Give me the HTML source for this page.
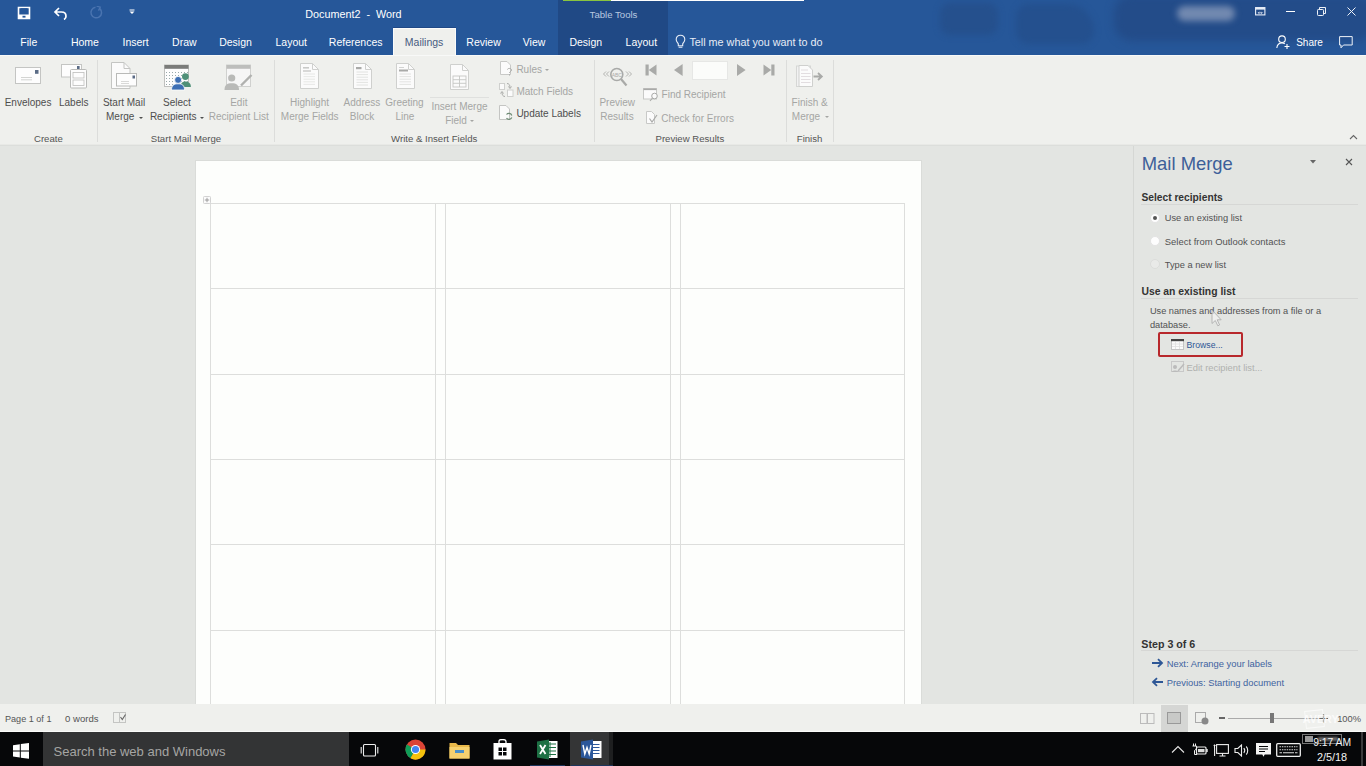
<!DOCTYPE html>
<html><head><meta charset="utf-8">
<style>
*{margin:0;padding:0;box-sizing:border-box}
html,body{width:1366px;height:766px;overflow:hidden;background:#e3e4e2;font-family:"Liberation Sans",sans-serif;position:relative}
.a{position:absolute}
.t{position:absolute;white-space:nowrap;line-height:1}
svg{display:block}
</style></head><body>
<div class="a" style="left:0px;top:0px;width:1366px;height:55px;background:#265799;"></div>
<div class="a" style="left:880px;top:0px;width:486px;height:50px;overflow:hidden;"><div class="a" style="left:60px;top:3px;width:58px;height:32px;border-radius:10px;background:#25508d;filter:blur(3px)"></div><div class="a" style="left:136px;top:4px;width:78px;height:40px;border-radius:14px 30px 14px 14px;background:#24508e;filter:blur(3px)"></div><div class="a" style="left:234px;top:-5px;width:260px;height:46px;border-radius:18px;background:#234c89;filter:blur(4px)"></div><div class="a" style="left:297px;top:6px;width:58px;height:15px;border-radius:8px;background:#7289b0;filter:blur(3px)"></div></div>
<div class="a" style="left:558px;top:0px;width:110px;height:55px;background:#204985;"></div>
<div class="a" style="left:563px;top:0px;width:48px;height:1px;background:#8ac43f;"></div>
<div class="a" style="left:611px;top:0px;width:193px;height:1px;background:#ffffff;"></div>
<svg class="a" style="left:17px;top:6px;" width="14" height="14" viewBox="0 0 14 14"><path d="M1.5 1.5h11v11h-11z" fill="none" stroke="#fff" stroke-width="1.6"/><rect x="3.5" y="2.2" width="7" height="4.8" fill="#265799"/><rect x="1.5" y="8.5" width="11" height="4" fill="#fff"/><rect x="5.5" y="9.8" width="3" height="1.8" fill="#265799"/></svg>
<svg class="a" style="left:53px;top:6px;" width="15" height="14" viewBox="0 0 15 14"><path d="M6 2 L2 6 L6 10 M2.5 6 H8.5 C11.5 6 13 8 13 10.2 C13 12 12 13 11 13.5" fill="none" stroke="#fff" stroke-width="1.7"/></svg>
<svg class="a" style="left:89px;top:6px;" width="15" height="14" viewBox="0 0 15 14"><path d="M10.8 2.6 A5.3 5.3 0 1 1 6.5 1.3" fill="none" stroke="#4a74b0" stroke-width="1.5"/><path d="M7.6 0.2 L11.2 1.2 L9.5 4.6" fill="none" stroke="#4a74b0" stroke-width="1.4"/></svg>
<svg class="a" style="left:129px;top:9px;" width="6" height="6" viewBox="0 0 6 6"><rect x="0.5" y="0.5" width="5" height="1" fill="#fff"/><path d="M0.5 2.5 H5.5 L3 5 Z" fill="#fff"/></svg>
<div class="t" style="left:305.2px;top:9.26px;font-size:10.80px;color:#ffffff;font-weight:400;">Document2&nbsp;&nbsp;-&nbsp;&nbsp;Word</div>
<div class="t" style="left:589.6px;top:10.17px;font-size:9.60px;color:#b8c8e0;font-weight:400;">Table Tools</div>
<div class="t" style="left:20.3px;top:37.41px;font-size:10.50px;color:#ffffff;font-weight:400;">File</div>
<div class="t" style="left:70.9px;top:37.41px;font-size:10.50px;color:#ffffff;font-weight:400;">Home</div>
<div class="t" style="left:122.5px;top:37.41px;font-size:10.50px;color:#ffffff;font-weight:400;">Insert</div>
<div class="t" style="left:172.1px;top:37.41px;font-size:10.50px;color:#ffffff;font-weight:400;">Draw</div>
<div class="t" style="left:219.2px;top:37.41px;font-size:10.50px;color:#ffffff;font-weight:400;">Design</div>
<div class="t" style="left:275.5px;top:37.41px;font-size:10.50px;color:#ffffff;font-weight:400;">Layout</div>
<div class="t" style="left:328.8px;top:37.41px;font-size:10.50px;color:#ffffff;font-weight:400;">References</div>
<div class="t" style="left:466.3px;top:37.41px;font-size:10.50px;color:#ffffff;font-weight:400;">Review</div>
<div class="t" style="left:522.8px;top:37.41px;font-size:10.50px;color:#ffffff;font-weight:400;">View</div>
<div class="t" style="left:569.4px;top:37.41px;font-size:10.50px;color:#ffffff;font-weight:400;">Design</div>
<div class="t" style="left:625.6px;top:37.41px;font-size:10.50px;color:#ffffff;font-weight:400;">Layout</div>
<div class="a" style="left:393px;top:28px;width:63px;height:28px;background:#fafbfb;"></div>
<div class="a" style="left:394px;top:29px;width:61px;height:27px;background:#eff0ed;"></div>
<div class="a" style="left:393px;top:27px;width:63px;height:1px;background:#1f4886;"></div>
<div class="t" style="left:404.8px;top:37.41px;font-size:10.50px;color:#475b80;font-weight:400;">Mailings</div>
<svg class="a" style="left:675px;top:34px;" width="11" height="16" viewBox="0 0 11 16"><path d="M5.5 1.2 C2.8 1.2 1.2 3.2 1.2 5.4 C1.2 7.4 2.6 8.6 3.3 9.8 V11.8 H7.7 V9.8 C8.4 8.6 9.8 7.4 9.8 5.4 C9.8 3.2 8.2 1.2 5.5 1.2 Z M3.6 13.2 H7.4" fill="none" stroke="#e8eef7" stroke-width="1.1"/></svg>
<div class="t" style="left:689.4px;top:37.16px;font-size:10.80px;color:#e6ecf5;font-weight:400;">Tell me what you want to do</div>
<svg class="a" style="left:1255px;top:7px;" width="11" height="9" viewBox="0 0 11 9"><rect x="0.6" y="0.6" width="9.3" height="7.3" fill="none" stroke="#e8eef7" stroke-width="1.1"/><rect x="0.6" y="0.6" width="9.3" height="2" fill="#e8eef7"/><path d="M3.5 5.8 H7 M4.2 4.8 L3.2 5.8 L4.2 6.8 M6.3 4.8 L7.3 5.8 L6.3 6.8" fill="none" stroke="#e8eef7" stroke-width="0.8"/></svg>
<div class="a" style="left:1286px;top:11px;width:9px;height:1px;background:#ffffff;"></div>
<svg class="a" style="left:1317px;top:7px;" width="9" height="9" viewBox="0 0 9 9"><rect x="0.5" y="2.5" width="6" height="6" rx="0.8" fill="none" stroke="#eef2f8" stroke-width="1"/><path d="M2.5 2.5 V0.5 H8.5 V6.5 H6.5" fill="none" stroke="#eef2f8" stroke-width="1"/></svg>
<svg class="a" style="left:1347px;top:7px;" width="9" height="9" viewBox="0 0 9 9"><path d="M0.5 0.5 L8.5 8.5 M8.5 0.5 L0.5 8.5" stroke="#eef2f8" stroke-width="1"/></svg>
<svg class="a" style="left:1276px;top:35px;" width="15" height="14" viewBox="0 0 15 14"><circle cx="6" cy="4.2" r="3.3" fill="none" stroke="#fff" stroke-width="1.1"/><path d="M0.8 13 C1.2 9.5 3.5 8 6 8 C7 8 8 8.2 8.8 8.8" fill="none" stroke="#fff" stroke-width="1.1"/><path d="M11 9 V14 M8.5 11.5 H13.5" stroke="#fff" stroke-width="1.1"/></svg>
<div class="t" style="left:1296.2px;top:38.13px;font-size:10.00px;color:#ffffff;font-weight:400;">Share</div>
<svg class="a" style="left:1339px;top:36px;" width="14" height="13" viewBox="0 0 14 13"><path d="M0.6 0.6 H13.2 V9 H4.5 L2 11.8 V9 H0.6 Z" fill="none" stroke="#eef2f8" stroke-width="1"/></svg>
<div class="a" style="left:0px;top:55px;width:1366px;height:89px;background:#eff0ed;"></div>
<div class="a" style="left:0px;top:55px;width:1366px;height:1px;background:#f8f9f8;"></div>
<div class="a" style="left:0px;top:144px;width:1366px;height:1px;background:#e8e9e6;"></div>
<div class="a" style="left:0px;top:145px;width:1366px;height:1px;background:#dcdedb;"></div>
<div class="a" style="left:97px;top:60px;width:1px;height:82px;background:#dcdddb;"></div>
<div class="a" style="left:274px;top:60px;width:1px;height:82px;background:#dcdddb;"></div>
<div class="a" style="left:594px;top:60px;width:1px;height:82px;background:#dcdddb;"></div>
<div class="a" style="left:786px;top:60px;width:1px;height:82px;background:#dcdddb;"></div>
<div class="a" style="left:833px;top:60px;width:1px;height:82px;background:#dcdddb;"></div>
<div class="t" style="left:4.7px;top:98.13px;font-size:10.00px;color:#4e4e4e;font-weight:400;">Envelopes</div>
<div class="t" style="left:59.0px;top:98.13px;font-size:10.00px;color:#4e4e4e;font-weight:400;">Labels</div>
<div class="t" style="left:102.9px;top:98.13px;font-size:10.00px;color:#4e4e4e;font-weight:400;">Start Mail</div>
<div class="t" style="left:106.0px;top:112.33px;font-size:10.00px;color:#4e4e4e;font-weight:400;">Merge</div>
<div class="t" style="left:163.1px;top:98.13px;font-size:10.00px;color:#4e4e4e;font-weight:400;">Select</div>
<div class="t" style="left:149.9px;top:112.33px;font-size:10.00px;color:#4e4e4e;font-weight:400;">Recipients</div>
<div class="t" style="left:230.2px;top:98.13px;font-size:10.00px;color:#a5a6a4;font-weight:400;">Edit</div>
<div class="t" style="left:208.7px;top:112.33px;font-size:10.00px;color:#a5a6a4;font-weight:400;">Recipient List</div>
<div class="t" style="left:34.0px;top:133.67px;font-size:9.60px;color:#555555;font-weight:400;">Create</div>
<div class="t" style="left:150.8px;top:133.67px;font-size:9.60px;color:#555555;font-weight:400;">Start Mail Merge</div>
<div class="t" style="left:290.1px;top:98.03px;font-size:10.00px;color:#a5a6a4;font-weight:400;">Highlight</div>
<div class="t" style="left:280.8px;top:112.03px;font-size:10.00px;color:#a5a6a4;font-weight:400;">Merge Fields</div>
<div class="t" style="left:343.6px;top:98.03px;font-size:10.00px;color:#a5a6a4;font-weight:400;">Address</div>
<div class="t" style="left:349.8px;top:112.03px;font-size:10.00px;color:#a5a6a4;font-weight:400;">Block</div>
<div class="t" style="left:385.3px;top:98.03px;font-size:10.00px;color:#a5a6a4;font-weight:400;">Greeting</div>
<div class="t" style="left:395.4px;top:112.03px;font-size:10.00px;color:#a5a6a4;font-weight:400;">Line</div>
<div class="t" style="left:431.4px;top:102.33px;font-size:10.00px;color:#a5a6a4;font-weight:400;">Insert Merge</div>
<div class="t" style="left:445.2px;top:115.73px;font-size:10.00px;color:#a5a6a4;font-weight:400;">Field</div>
<div class="a" style="left:430px;top:97px;width:59px;height:1px;background:#dfe0de;"></div>
<div class="t" style="left:516.4px;top:64.73px;font-size:10.00px;color:#a5a6a4;font-weight:400;">Rules</div>
<div class="t" style="left:516.4px;top:86.73px;font-size:10.00px;color:#a5a6a4;font-weight:400;">Match Fields</div>
<div class="t" style="left:516.4px;top:108.93px;font-size:10.00px;color:#4e4e4e;font-weight:400;">Update Labels</div>
<div class="t" style="left:391.1px;top:134.17px;font-size:9.60px;color:#555555;font-weight:400;">Write &amp; Insert Fields</div>
<div class="t" style="left:599.4px;top:98.33px;font-size:10.00px;color:#a5a6a4;font-weight:400;">Preview</div>
<div class="t" style="left:600.3px;top:112.13px;font-size:10.00px;color:#a5a6a4;font-weight:400;">Results</div>
<div class="t" style="left:661.6px;top:90.43px;font-size:10.00px;color:#a5a6a4;font-weight:400;">Find Recipient</div>
<div class="t" style="left:661.2px;top:114.13px;font-size:10.00px;color:#a5a6a4;font-weight:400;">Check for Errors</div>
<div class="t" style="left:655.5px;top:134.27px;font-size:9.60px;color:#555555;font-weight:400;">Preview Results</div>
<div class="t" style="left:791.6px;top:98.33px;font-size:10.00px;color:#a5a6a4;font-weight:400;">Finish &amp;</div>
<div class="t" style="left:791.8px;top:112.13px;font-size:10.00px;color:#a5a6a4;font-weight:400;">Merge</div>
<div class="t" style="left:796.8px;top:134.27px;font-size:9.60px;color:#555555;font-weight:400;">Finish</div>
<svg class="a" style="left:139px;top:117px;" width="4" height="2" viewBox="0 0 4 2"><path d="M0 0 H4 L2 2 Z" fill="#4e4e4e"/></svg>
<svg class="a" style="left:200px;top:117px;" width="4" height="2" viewBox="0 0 4 2"><path d="M0 0 H4 L2 2 Z" fill="#4e4e4e"/></svg>
<svg class="a" style="left:470px;top:120px;" width="4" height="2" viewBox="0 0 4 2"><path d="M0 0 H4 L2 2 Z" fill="#a5a6a4"/></svg>
<svg class="a" style="left:545px;top:69px;" width="4" height="2" viewBox="0 0 4 2"><path d="M0 0 H4 L2 2 Z" fill="#a5a6a4"/></svg>
<svg class="a" style="left:825px;top:116px;" width="4" height="2" viewBox="0 0 4 2"><path d="M0 0 H4 L2 2 Z" fill="#a5a6a4"/></svg>
<svg class="a" style="left:1349px;top:134px;" width="9" height="6" viewBox="0 0 9 6"><path d="M1 5 L4.5 1.5 L8 5" fill="none" stroke="#666" stroke-width="1.1"/></svg>
<svg class="a" style="left:15px;top:67px;" width="27" height="18" viewBox="0 0 27 18"><rect x="0.5" y="0.5" width="25" height="16" fill="#fdfdfd" stroke="#c4c5c3"/><rect x="20" y="3" width="3.5" height="3.8" fill="#5a6b85"/><path d="M6 10.5 H17 M6 12.8 H17" stroke="#c8c9c7" stroke-width="0.8"/></svg>
<svg class="a" style="left:60px;top:63px;" width="28" height="27" viewBox="0 0 28 27"><rect x="1.5" y="1.5" width="20" height="12.5" fill="#fdfdfd" stroke="#c4c5c3"/><rect x="17" y="3" width="2.6" height="3" fill="#5a6b85"/><rect x="10.5" y="6.5" width="16" height="18.5" rx="1" fill="#fdfdfd" stroke="#b9bab8"/><rect x="13" y="9.5" width="11" height="5.5" fill="none" stroke="#bdbebc" stroke-width="0.8"/><rect x="13" y="17" width="11" height="5.5" fill="none" stroke="#bdbebc" stroke-width="0.8"/></svg>
<svg class="a" style="left:110px;top:62px;" width="28" height="28" viewBox="0 0 28 28"><path d="M1.5 0.5 H14 L20 6.5 V26.5 H1.5 Z" fill="#fbfbfb" stroke="#c4c5c3"/><path d="M14 0.5 V6.5 H20" fill="none" stroke="#c4c5c3"/><rect x="6.5" y="11.5" width="20" height="12.5" fill="#fdfdfd" stroke="#b9bab8"/><rect x="22.5" y="13.5" width="2.5" height="3" fill="#5a6b85"/><path d="M11 19.5 H19 M11 21.5 H19" stroke="#c8c9c7" stroke-width="0.7"/></svg>
<svg class="a" style="left:164px;top:64px;" width="29" height="27" viewBox="0 0 29 27"><rect x="0.5" y="1" width="24" height="21.5" fill="#fdfdfd" stroke="#bfc0be"/><rect x="0.5" y="1" width="24" height="3.8" fill="#7b7c7a"/><rect x="2" y="8" width="1" height="1" fill="#9aa"/><rect x="2" y="11" width="1" height="1" fill="#9aa"/><rect x="2" y="14" width="1" height="1" fill="#9aa"/><rect x="2" y="17" width="1" height="1" fill="#9aa"/><rect x="2" y="20" width="1" height="1" fill="#9aa"/><rect x="5" y="8" width="1" height="1" fill="#9aa"/><rect x="5" y="11" width="1" height="1" fill="#9aa"/><rect x="5" y="14" width="1" height="1" fill="#9aa"/><rect x="5" y="17" width="1" height="1" fill="#9aa"/><rect x="5" y="20" width="1" height="1" fill="#9aa"/><rect x="8" y="8" width="1" height="1" fill="#9aa"/><rect x="8" y="11" width="1" height="1" fill="#9aa"/><rect x="8" y="14" width="1" height="1" fill="#9aa"/><rect x="8" y="17" width="1" height="1" fill="#9aa"/><rect x="8" y="20" width="1" height="1" fill="#9aa"/><rect x="11" y="8" width="1" height="1" fill="#9aa"/><rect x="11" y="11" width="1" height="1" fill="#9aa"/><rect x="11" y="14" width="1" height="1" fill="#9aa"/><rect x="11" y="17" width="1" height="1" fill="#9aa"/><rect x="11" y="20" width="1" height="1" fill="#9aa"/><rect x="14" y="8" width="1" height="1" fill="#9aa"/><rect x="14" y="11" width="1" height="1" fill="#9aa"/><rect x="14" y="14" width="1" height="1" fill="#9aa"/><rect x="14" y="17" width="1" height="1" fill="#9aa"/><rect x="14" y="20" width="1" height="1" fill="#9aa"/><rect x="17" y="8" width="1" height="1" fill="#9aa"/><rect x="17" y="11" width="1" height="1" fill="#9aa"/><rect x="17" y="14" width="1" height="1" fill="#9aa"/><rect x="17" y="17" width="1" height="1" fill="#9aa"/><rect x="17" y="20" width="1" height="1" fill="#9aa"/><rect x="20" y="8" width="1" height="1" fill="#9aa"/><rect x="20" y="11" width="1" height="1" fill="#9aa"/><rect x="20" y="14" width="1" height="1" fill="#9aa"/><rect x="20" y="17" width="1" height="1" fill="#9aa"/><rect x="20" y="20" width="1" height="1" fill="#9aa"/><rect x="23" y="8" width="1" height="1" fill="#9aa"/><rect x="23" y="11" width="1" height="1" fill="#9aa"/><rect x="23" y="14" width="1" height="1" fill="#9aa"/><rect x="23" y="17" width="1" height="1" fill="#9aa"/><rect x="23" y="20" width="1" height="1" fill="#9aa"/><circle cx="21.4" cy="12.6" r="3.4" fill="#4f9078"/><path d="M16.5 23 C16.5 18.8 18.6 17.5 21.4 17.5 C24.2 17.5 26.9 18.8 26.9 23 Z" fill="#4f9078"/><circle cx="14.1" cy="15.9" r="3.5" fill="#3d6fb4" stroke="#fdfdfd" stroke-width="0.8"/><path d="M7.5 26 C7.5 21.3 10 19.8 14.1 19.8 C18.2 19.8 20.5 21.3 20.5 26 Z" fill="#3d6fb4" stroke="#fdfdfd" stroke-width="0.8"/></svg>
<svg class="a" style="left:224px;top:64px;" width="30" height="27" viewBox="0 0 30 27"><rect x="2.5" y="1" width="24" height="21.5" fill="#f6f6f6" stroke="#d0d1cf"/><rect x="2.5" y="1" width="24" height="3.8" fill="#bdbebc"/><circle cx="7.7" cy="14" r="3.6" fill="#b9bab8"/><path d="M0.5 26 C0.5 21 3 19.3 7.7 19.3 C12.4 19.3 15 21 15 26 Z" fill="#b9bab8"/><path d="M17 21.5 L27.5 11" stroke="#b0b1af" stroke-width="2.4"/></svg>
<svg class="a" style="left:300px;top:63px;" width="19" height="26" viewBox="0 0 19 26"><path d="M0.5 0.5 H12.5 L18.5 6.5 V25.5 H0.5 Z" fill="#fbfbfb" stroke="#cfd0ce" stroke-width="1"/><path d="M12.5 0.5 V6.5 H18.5" fill="none" stroke="#cfd0ce" stroke-width="1"/><rect x="3" y="4" width="6" height="1.6" fill="#c9cac8"/><rect x="3" y="7.5" width="8" height="1" fill="#b5b6b4"/><path d="M3.5 11.0 H15" stroke="#e2e3e1" stroke-width="0.8"/><path d="M3.5 13.6 H15" stroke="#e2e3e1" stroke-width="0.8"/><path d="M3.5 16.2 H15" stroke="#e2e3e1" stroke-width="0.8"/><path d="M3.5 18.8 H15" stroke="#e2e3e1" stroke-width="0.8"/><path d="M3.5 21.4 H15" stroke="#e2e3e1" stroke-width="0.8"/></svg>
<svg class="a" style="left:353px;top:63px;" width="19" height="26" viewBox="0 0 19 26"><path d="M0.5 0.5 H12.5 L18.5 6.5 V25.5 H0.5 Z" fill="#fbfbfb" stroke="#cfd0ce" stroke-width="1"/><path d="M12.5 0.5 V6.5 H18.5" fill="none" stroke="#cfd0ce" stroke-width="1"/><rect x="3" y="4" width="5.5" height="2.2" fill="#a9aaa8"/><path d="M3.5 9.0 H15" stroke="#dcdddb" stroke-width="0.8"/><path d="M3.5 11.6 H15" stroke="#dcdddb" stroke-width="0.8"/><path d="M3.5 14.2 H15" stroke="#dcdddb" stroke-width="0.8"/><path d="M3.5 16.8 H15" stroke="#dcdddb" stroke-width="0.8"/><path d="M3.5 19.4 H15" stroke="#dcdddb" stroke-width="0.8"/><path d="M3.5 22.0 H15" stroke="#dcdddb" stroke-width="0.8"/></svg>
<svg class="a" style="left:396px;top:63px;" width="19" height="26" viewBox="0 0 19 26"><path d="M0.5 0.5 H12.5 L18.5 6.5 V25.5 H0.5 Z" fill="#fbfbfb" stroke="#cfd0ce" stroke-width="1"/><path d="M12.5 0.5 V6.5 H18.5" fill="none" stroke="#cfd0ce" stroke-width="1"/><rect x="3" y="4" width="5" height="0.8" fill="#c9cac8"/><rect x="3" y="6.5" width="9" height="2" fill="#a9aaa8"/><path d="M3.5 11.0 H15" stroke="#dcdddb" stroke-width="0.8"/><path d="M3.5 13.6 H15" stroke="#dcdddb" stroke-width="0.8"/><path d="M3.5 16.2 H15" stroke="#dcdddb" stroke-width="0.8"/><path d="M3.5 18.8 H15" stroke="#dcdddb" stroke-width="0.8"/><path d="M3.5 21.4 H15" stroke="#dcdddb" stroke-width="0.8"/></svg>
<svg class="a" style="left:450px;top:64px;" width="19" height="26" viewBox="0 0 19 26"><path d="M0.5 0.5 H12.5 L18.5 6.5 V25.5 H0.5 Z" fill="#fbfbfb" stroke="#cfd0ce" stroke-width="1"/><path d="M12.5 0.5 V6.5 H18.5" fill="none" stroke="#cfd0ce" stroke-width="1"/><rect x="3" y="12" width="13" height="11" fill="none" stroke="#c5c6c4" stroke-width="0.9"/><path d="M3 15.7 H16 M3 19.3 H16 M9.5 12 V23" stroke="#c5c6c4" stroke-width="0.9"/></svg>
<svg class="a" style="left:500px;top:61px;" width="13" height="15" viewBox="0 0 13 15"><path d="M0.5 0.5 H7 L10.5 4 V13.5 H0.5 Z" fill="#fbfbfb" stroke="#c8c9c7"/><path d="M7.5 8.5 C7.5 7 11.5 7 11.5 9 C11.5 10.5 9.5 10.5 9.5 12 M9.5 13.2 V14.5" fill="none" stroke="#a9aaa8" stroke-width="1"/></svg>
<svg class="a" style="left:499px;top:83px;" width="15" height="14" viewBox="0 0 15 14"><rect x="0.5" y="0.5" width="5" height="6" fill="#fbfbfb" stroke="#cfd0ce"/><rect x="8.5" y="7" width="5.5" height="6.5" fill="#fbfbfb" stroke="#cfd0ce"/><path d="M8 0.5 C10 0.5 11 2 11 4.5 M9.5 3.5 L11 5.5 L12.5 3.5 M6 13.5 C4 13.5 3 12 3 9.5 M1.5 10.5 L3 8.5 L4.5 10.5" fill="none" stroke="#a9aaa8" stroke-width="1"/></svg>
<svg class="a" style="left:499px;top:105px;" width="14" height="16" viewBox="0 0 14 16"><path d="M0.5 0.5 H7 L10.5 4 V14.5 H0.5 Z" fill="#fbfbfb" stroke="#c4c5c3"/><path d="M7.5 9.5 A3 3 0 0 1 12.8 10.5 M12.8 12.5 A3 3 0 0 1 7.5 13" fill="none" stroke="#6e8b74" stroke-width="1.2"/></svg>
<svg class="a" style="left:601px;top:66px;" width="32" height="22" viewBox="0 0 32 22"><circle cx="15.8" cy="8.5" r="6" fill="none" stroke="#a9aaa8" stroke-width="1.6"/><path d="M20 13 L25.5 19.5" stroke="#a9aaa8" stroke-width="2.2"/><text x="15.8" y="10.5" font-size="5" text-anchor="middle" fill="#a9aaa8" font-family="Liberation Sans">ABC</text><path d="M5 5.5 L2.5 8 L5 10.5 M8 5.5 L5.5 8 L8 10.5 M25 5.5 L27.5 8 L25 10.5 M28 5.5 L30.5 8 L28 10.5" fill="none" stroke="#a9aaa8" stroke-width="0.9"/></svg>
<svg class="a" style="left:645px;top:64px;" width="12" height="12" viewBox="0 0 12 12"><rect x="0.5" y="0.5" width="3.2" height="11" fill="#a9aaa8"/><path d="M11.5 0.5 V11.5 L3.7 6 Z" fill="#a9aaa8"/></svg>
<svg class="a" style="left:674px;top:64px;" width="9" height="12" viewBox="0 0 9 12"><path d="M8.6 0 V12 L0 6 Z" fill="#a9aaa8"/></svg>
<div class="a" style="left:692px;top:61px;width:36px;height:19px;background:#fbfcfa;border:1px solid #e6e7e5"></div>
<svg class="a" style="left:737px;top:64px;" width="9" height="12" viewBox="0 0 9 12"><path d="M0 0 V12 L8.6 6 Z" fill="#a9aaa8"/></svg>
<svg class="a" style="left:763px;top:64px;" width="12" height="12" viewBox="0 0 12 12"><path d="M0.5 0.5 V11.5 L8.3 6 Z" fill="#a9aaa8"/><rect x="8.3" y="0.5" width="3.2" height="11" fill="#a9aaa8"/></svg>
<svg class="a" style="left:643px;top:88px;" width="16" height="14" viewBox="0 0 16 14"><rect x="0.5" y="0.5" width="13" height="10.5" fill="#fbfbfb" stroke="#c8c9c7"/><rect x="0.5" y="0.5" width="13" height="1.6" fill="#a9aaa8"/><circle cx="11.5" cy="8" r="2.8" fill="#fbfbfb" stroke="#a9aaa8" stroke-width="1"/><path d="M9.5 10 L7 13" stroke="#a9aaa8" stroke-width="1.1"/></svg>
<svg class="a" style="left:646px;top:111px;" width="12" height="14" viewBox="0 0 12 14"><path d="M0.5 0.5 H5.5 L8.5 3.5 V12.5 H0.5 Z" fill="#fbfbfb" stroke="#c8c9c7"/><path d="M3.5 7.5 L6 11 L11 4" fill="none" stroke="#a9aaa8" stroke-width="1.2"/></svg>
<svg class="a" style="left:796px;top:65px;" width="28" height="23" viewBox="0 0 28 23"><rect x="0.5" y="1" width="14" height="20.5" fill="#f2f2f2" stroke="#d6d7d5"/><path d="M3 0.5 H12 L16.5 5 V21.5 H3 Z" fill="#fbfbfb" stroke="#cfd0ce"/><path d="M5 5 H12 M5 8.5 H14.5 M5 11.5 H14.5 M5 14.5 H14.5 M5 17.5 H14.5" stroke="#dcd6d9" stroke-width="0.8"/><path d="M17.5 11.5 H25.5 M22 8 L25.8 11.5 L22 15" fill="none" stroke="#a9aaa8" stroke-width="1.8"/></svg>
<div class="a" style="left:0px;top:146px;width:1133px;height:559px;background:#e3e5e2;"></div>
<div class="a" style="left:195px;top:160px;width:727px;height:545px;background:#dadcd9;"></div>
<div class="a" style="left:196px;top:161px;width:725px;height:544px;background:#fdfefc;"></div>
<div class="a" style="left:210px;top:203px;width:695px;height:1px;background:#dddedc;"></div>
<div class="a" style="left:210px;top:288px;width:695px;height:1px;background:#dddedc;"></div>
<div class="a" style="left:210px;top:374px;width:695px;height:1px;background:#dddedc;"></div>
<div class="a" style="left:210px;top:459px;width:695px;height:1px;background:#dddedc;"></div>
<div class="a" style="left:210px;top:544px;width:695px;height:1px;background:#dddedc;"></div>
<div class="a" style="left:210px;top:630px;width:695px;height:1px;background:#dddedc;"></div>
<div class="a" style="left:210px;top:203px;width:1px;height:502px;background:#dddedc;"></div>
<div class="a" style="left:435px;top:203px;width:1px;height:502px;background:#dddedc;"></div>
<div class="a" style="left:445px;top:203px;width:1px;height:502px;background:#dddedc;"></div>
<div class="a" style="left:670px;top:203px;width:1px;height:502px;background:#dddedc;"></div>
<div class="a" style="left:680px;top:203px;width:1px;height:502px;background:#dddedc;"></div>
<div class="a" style="left:904px;top:203px;width:1px;height:502px;background:#dddedc;"></div>
<svg class="a" style="left:203px;top:196px;" width="8" height="8" viewBox="0 0 8 8"><rect x="0.5" y="0.5" width="7" height="7" rx="0.8" fill="#fbfbfb" stroke="#d2d2d2" stroke-width="1"/><path d="M4 1.8 V6.2 M1.8 4 H6.2" stroke="#8a8a8a" stroke-width="0.8"/></svg>
<div class="a" style="left:1133px;top:146px;width:233px;height:559px;background:#e3e5e2;"></div>
<div class="a" style="left:1133px;top:146px;width:1px;height:559px;background:#d5d7d4;"></div>
<div class="t" style="left:1141.8px;top:154.52px;font-size:18.40px;color:#3d5f99;font-weight:400;">Mail Merge</div>
<svg class="a" style="left:1310px;top:160px;" width="6" height="4" viewBox="0 0 6 4"><path d="M0 0 H6 L3 3.5 Z" fill="#666"/></svg>
<svg class="a" style="left:1345px;top:158px;" width="8" height="8" viewBox="0 0 8 8"><path d="M1 1 L7 7 M7 1 L1 7" stroke="#555" stroke-width="1.1"/></svg>
<div class="t" style="left:1141.4px;top:193.13px;font-size:10.24px;color:#333;font-weight:700;">Select recipients</div>
<div class="a" style="left:1141px;top:204px;width:217px;height:1px;background:#d6d7d5;"></div>
<svg class="a" style="left:1149px;top:212px;" width="12" height="12" viewBox="0 0 12 12"><circle cx="6" cy="6" r="4.5" fill="#fdfdfd" stroke="#e0e0e0" stroke-width="0.8"/><circle cx="6" cy="6" r="2" fill="#555"/></svg>
<svg class="a" style="left:1149px;top:235px;" width="12" height="12" viewBox="0 0 12 12"><circle cx="6" cy="6" r="4.5" fill="#fdfdfd" stroke="#e0e0e0" stroke-width="0.8"/></svg>
<svg class="a" style="left:1149px;top:258px;" width="12" height="12" viewBox="0 0 12 12"><circle cx="6" cy="6" r="4.5" fill="#e9eae8" stroke="#d8d9d7" stroke-width="0.8"/></svg>
<div class="t" style="left:1164.8px;top:214.34px;font-size:9.28px;color:#525252;font-weight:400;">Use an existing list</div>
<div class="t" style="left:1164.8px;top:237.30px;font-size:9.45px;color:#525252;font-weight:400;">Select from Outlook contacts</div>
<div class="t" style="left:1164.8px;top:260.54px;font-size:9.28px;color:#525252;font-weight:400;">Type a new list</div>
<div class="t" style="left:1141.4px;top:287.12px;font-size:10.38px;color:#333;font-weight:700;">Use an existing list</div>
<div class="a" style="left:1141px;top:298px;width:217px;height:1px;background:#d6d7d5;"></div>
<div class="t" style="left:1149.9px;top:306.99px;font-size:9.23px;color:#525252;font-weight:400;">Use names and addresses from a file or a</div>
<div class="t" style="left:1149.9px;top:320.56px;font-size:9.27px;color:#525252;font-weight:400;">database.</div>
<div class="a" style="left:1158px;top:332px;width:85px;height:25px;border:2px solid #b8282c;border-radius:2px"></div>
<svg class="a" style="left:1171px;top:339px;" width="13" height="11" viewBox="0 0 13 11"><rect x="0.5" y="0.5" width="12" height="10" fill="#fbfbfb" stroke="#c4c4c4" stroke-width="1"/><path d="M1 5 H12 M1 7.5 H12 M4.5 3 V10 M8.5 3 V10" stroke="#e0e0e0" stroke-width="0.8"/><rect x="0" y="0" width="13" height="2.2" fill="#444"/></svg>
<div class="t" style="left:1186.5px;top:341.43px;font-size:8.71px;color:#2e5796;font-weight:400;">Browse...</div>
<svg class="a" style="left:1171px;top:361px;" width="14" height="13" viewBox="0 0 14 13"><rect x="0.5" y="0.5" width="12" height="10" fill="none" stroke="#c8c8c8" stroke-width="1"/><circle cx="4" cy="6" r="2" fill="#bbb"/><path d="M1 11 C1 9 7 9 7 11Z" fill="#bbb"/><path d="M7 10 L13 3" stroke="#bbb" stroke-width="1.5"/></svg>
<div class="t" style="left:1186.5px;top:363.57px;font-size:9.37px;color:#b0b1af;font-weight:400;">Edit recipient list...</div>
<svg class="a" style="left:1211px;top:309px;opacity:0.7" width="11" height="18" viewBox="0 0 11 18"><path d="M1 1 V14.5 L4.3 11.5 L6.8 16.8 L8.6 16 L6.2 10.8 H10.2 Z" fill="#f4f4f4" stroke="#9a9a9a" stroke-width="0.9"/></svg>
<div class="t" style="left:1141.3px;top:638.86px;font-size:10.68px;color:#333;font-weight:700;">Step 3 of 6</div>
<div class="a" style="left:1141px;top:650px;width:217px;height:1px;background:#d6d7d5;"></div>
<svg class="a" style="left:1151px;top:658px;" width="13" height="10" viewBox="0 0 13 10"><path d="M1 5 H11 M7 1.2 L11 5 L7 8.8" fill="none" stroke="#2e5796" stroke-width="1.8"/></svg>
<div class="t" style="left:1166.7px;top:660.16px;font-size:9.38px;color:#3e63a0;font-weight:400;">Next: Arrange your labels</div>
<svg class="a" style="left:1151px;top:677px;" width="13" height="10" viewBox="0 0 13 10"><path d="M12 5 H2 M6 1.2 L2 5 L6 8.8" fill="none" stroke="#2e5796" stroke-width="1.8"/></svg>
<div class="t" style="left:1166.7px;top:678.58px;font-size:9.36px;color:#3e63a0;font-weight:400;">Previous: Starting document</div>
<div class="a" style="left:0px;top:704px;width:1366px;height:28px;background:#eff0ed;"></div>
<div class="a" style="left:0px;top:731px;width:1366px;height:1px;background:#fafbf9;"></div>
<div class="t" style="left:5.0px;top:714.60px;font-size:9.09px;color:#555;font-weight:400;">Page 1 of 1</div>
<div class="t" style="left:65.0px;top:714.20px;font-size:9.57px;color:#555;font-weight:400;">0 words</div>
<svg class="a" style="left:113px;top:712px;" width="14" height="11" viewBox="0 0 14 11"><rect x="0.5" y="0.5" width="6" height="10" fill="none" stroke="#c4c5c3" stroke-width="1"/><rect x="6.5" y="0.5" width="6" height="10" fill="none" stroke="#c4c5c3" stroke-width="1"/><path d="M7.5 5 L9.3 7.5 L12.5 2.5" fill="none" stroke="#666" stroke-width="1.1"/></svg>
<svg class="a" style="left:1140px;top:713px;" width="15" height="12" viewBox="0 0 15 12"><rect x="0.5" y="0.5" width="6.5" height="10" fill="none" stroke="#bbb"/><rect x="7.5" y="0.5" width="6.5" height="10" fill="none" stroke="#bbb"/></svg>
<div class="a" style="left:1161px;top:705px;width:27px;height:27px;background:#d5d6d4;"></div>
<svg class="a" style="left:1167px;top:712px;" width="15" height="13" viewBox="0 0 15 13"><rect x="0.5" y="0.5" width="13" height="11" fill="#c8c9c7" stroke="#999"/></svg>
<svg class="a" style="left:1195px;top:712px;" width="15" height="13" viewBox="0 0 15 13"><rect x="0.5" y="0.5" width="10" height="10" fill="none" stroke="#aaa"/><circle cx="10" cy="9" r="3.5" fill="#888"/></svg>
<div class="a" style="left:1219px;top:717px;width:6px;height:2px;background:#666;"></div>
<div class="a" style="left:1228px;top:718px;width:98px;height:1px;background:#aaa;"></div>
<div class="a" style="left:1270px;top:713px;width:4px;height:10px;background:#777;"></div>
<svg class="a" style="left:1319px;top:714px;" width="10" height="9" viewBox="0 0 10 9"><path d="M0 4.5 H9 M4.5 0 V9" stroke="#666" stroke-width="1.2"/></svg>
<div class="t" style="left:1337.2px;top:714.92px;font-size:9.31px;color:#555;font-weight:400;">100%</div>
<div class="a" style="left:0px;top:732px;width:1366px;height:34px;background:#060709;"></div>
<svg class="a" style="left:13px;top:743px;" width="17" height="16" viewBox="0 0 17 16"><path d="M0 2.2 L6.8 1.2 V7.4 H0Z M7.8 1 L16 0 V7.4 H7.8Z M0 8.4 H6.8 V14.6 L0 13.6Z M7.8 8.4 H16 V15.8 L7.8 14.8Z" fill="#fff"/></svg>
<div class="a" style="left:43px;top:732px;width:306px;height:34px;background:#333435;"></div>
<div class="t" style="left:53.5px;top:745.29px;font-size:13.00px;color:#a5a5a3;font-weight:400;">Search the web and Windows</div>
<svg class="a" style="left:360px;top:743px;" width="20" height="15" viewBox="0 0 20 15"><rect x="3.5" y="1.5" width="12" height="11.5" rx="1" fill="none" stroke="#eee" stroke-width="1.1"/><path d="M1.2 4 V10.5 M17.8 4 V10.5" stroke="#eee" stroke-width="1.1"/></svg>
<svg class="a" style="left:405px;top:739px;" width="21" height="21" viewBox="0 0 21 21"><circle cx="10.5" cy="10.5" r="10" fill="#db4437"/><path d="M10.5 10.5 L1.8 5.5 A10 10 0 0 0 5.5 19.2 Z" fill="#0f9d58"/><path d="M10.5 10.5 L5.5 19.2 A10 10 0 0 0 20.5 10.5 Z" fill="#f4c20d"/><circle cx="10.5" cy="10.5" r="4.6" fill="#fff"/><circle cx="10.5" cy="10.5" r="3.6" fill="#4285f4"/></svg>
<svg class="a" style="left:449px;top:741px;" width="21" height="18" viewBox="0 0 21 18"><path d="M0.5 2 H7 L9 4 H20.5 V17.5 H0.5 Z" fill="#e8b84a"/><rect x="0.5" y="6" width="20" height="11.5" fill="#f6d16f"/><rect x="6" y="9" width="9" height="3" fill="#4a90c9"/></svg>
<svg class="a" style="left:492px;top:739px;" width="21" height="21" viewBox="0 0 21 21"><path d="M7 4 V2.5 C7 1 8 0.5 10.5 0.5 C13 0.5 14 1 14 2.5 V4" fill="none" stroke="#fff" stroke-width="1.3"/><path d="M1.5 4 H19.5 V20.5 H1.5Z" fill="#fff"/><rect x="6.5" y="8.5" width="3.5" height="3.5" fill="#060709"/><rect x="11" y="8.5" width="3.5" height="3.5" fill="#060709"/><rect x="6.5" y="13" width="3.5" height="3.5" fill="#060709"/><rect x="11" y="13" width="3.5" height="3.5" fill="#060709"/></svg>
<svg class="a" style="left:537px;top:739px;" width="21" height="21" viewBox="0 0 21 21"><rect x="6" y="2" width="14.5" height="17" fill="#fff"/><path d="M7.5 5 H19 M7.5 8.5 H19 M7.5 12 H19 M7.5 15.5 H19 M13 3 V18" stroke="#1d7044" stroke-width="1"/><path d="M0 2.5 L12 0.5 V20.5 L0 18.5Z" fill="#1d7044"/><path d="M3 6 L8.5 15 M8.5 6 L3 15" stroke="#fff" stroke-width="1.8"/></svg>
<div class="a" style="left:570px;top:732px;width:39px;height:34px;background:#343536;"></div>
<div class="a" style="left:609px;top:732px;width:4px;height:34px;background:#1e1f20;"></div>
<div class="a" style="left:530px;top:765px;width:35px;height:1px;background:#1d355c;"></div>
<div class="a" style="left:571px;top:765px;width:42px;height:1px;background:#1d355c;"></div>
<svg class="a" style="left:581px;top:739px;" width="21" height="21" viewBox="0 0 21 21"><rect x="6" y="2" width="14.5" height="17" fill="#fff"/><path d="M9.5 5.5 H18.5 M9.5 8.5 H18.5 M9.5 11.5 H18.5 M9.5 14.5 H18.5" stroke="#2b579a" stroke-width="1.2"/><path d="M0 2.5 L12 0.5 V20.5 L0 18.5Z" fill="#2b579a"/><path d="M2 6 L3.8 15 L6 8.5 L8.2 15 L10 6" fill="none" stroke="#fff" stroke-width="1.4"/></svg>
<svg class="a" style="left:1171px;top:745px;" width="14" height="9" viewBox="0 0 14 9"><path d="M1 7.5 L7 1.5 L13 7.5" fill="none" stroke="#e6e6e6" stroke-width="1.1"/></svg>
<svg class="a" style="left:1191px;top:743px;" width="17" height="13" viewBox="0 0 17 13"><path d="M2.5 0.5 V3 M4.5 0.5 V3 M1.5 3 H5.5 V5 C5.5 6.5 3.5 6.5 3.5 8 V11.5 H6" fill="none" stroke="#eee" stroke-width="1"/><rect x="5.5" y="4" width="9.5" height="7" rx="1" fill="none" stroke="#eee" stroke-width="1.2"/><rect x="7" y="6" width="6.5" height="3.2" fill="#ddd"/><rect x="15.2" y="6" width="1.5" height="3" fill="#eee"/></svg>
<svg class="a" style="left:1213px;top:744px;" width="16" height="13" viewBox="0 0 16 13"><rect x="3.6" y="0.6" width="11.8" height="8.8" fill="none" stroke="#eee" stroke-width="1.1"/><path d="M9.5 9.5 V11.8 M6.5 12 H12.5 M1.5 0.5 V4 M0.6 1.5 H2.6 M1.6 4 V12" fill="none" stroke="#eee" stroke-width="1.1"/></svg>
<svg class="a" style="left:1234px;top:744px;" width="16" height="13" viewBox="0 0 16 13"><path d="M1 4.5 H3.8 L7.5 1 V12 L3.8 8.5 H1 Z" fill="none" stroke="#eee" stroke-width="1.1"/><path d="M9.8 4.2 C10.8 5.4 10.8 7.6 9.8 8.8 M12.2 2.5 C14.2 4.5 14.2 8.5 12.2 10.5" fill="none" stroke="#eee" stroke-width="1.1"/></svg>
<svg class="a" style="left:1256px;top:743px;" width="15" height="15" viewBox="0 0 15 15"><path d="M0 0 H15 V11.5 H8.7 L7.5 13.8 L6.3 11.5 H0 Z" fill="#f4f4f4"/><path d="M3 3.5 H12 M3 6 H12 M3 8.5 H9" stroke="#050608" stroke-width="1"/></svg>
<svg class="a" style="left:1276px;top:743px;" width="25" height="14" viewBox="0 0 25 14"><rect x="0.7" y="0.7" width="23.6" height="12.6" rx="1" fill="none" stroke="#eee" stroke-width="1.3"/><path d="M3.5 3.8 H21.5 M3.5 6.8 H21.5" stroke="#ddd" stroke-width="1.1" stroke-dasharray="1.5 0.9"/><path d="M3.5 9.8 H6 M7 9.8 H18 M19 9.8 H21.5" stroke="#ddd" stroke-width="1.1"/></svg>
<div class="a" style="left:1361px;top:732px;width:2px;height:34px;background:#3a3b3c;"></div>
<div class="a" style="left:1302px;top:734px;width:40px;height:10px;border:1px solid #777"></div>
<div class="a" style="left:1305px;top:736px;width:8px;height:6px;background:#9a9a9a;"></div>
<div class="a" style="left:1318px;top:737px;width:20px;height:4px;background:#6a6a6a;filter:blur(1px)"></div>
<div class="t" style="left:1302.8px;top:714.21px;font-size:10.74px;color:rgba(255,255,255,0.75);font-weight:700;">AVERY</div>
<div class="t" style="left:1313.2px;top:737.86px;font-size:10.33px;color:#f4f4f4;font-weight:400;">9:17 AM</div>
<div class="t" style="left:1316.9px;top:752.37px;font-size:10.90px;color:#f4f4f4;font-weight:400;">2/5/18</div>
<div class="a" style="left:1305px;top:710px;width:19px;height:18px;border:1px solid rgba(255,255,255,0.6);transform:rotate(-6deg)"></div>
</body></html>
